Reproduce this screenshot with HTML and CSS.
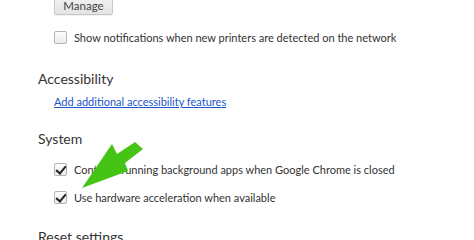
FILE: index.html
```html
<!DOCTYPE html>
<html>
<head>
<meta charset="utf-8">
<title>Settings</title>
<link rel="stylesheet" href="styles.css">
</head>
<body>
<div class="page">
	<div class="block">
		<button class="btn">Manage</button>
		<label class="row first"><span class="box"></span>Show notifications when new printers are detected on the network</label>
	</div>
	<h3 class="title t1">Accessibility</h3>
	<div class="block">
		<a href="javascript:;" class="link">Add additional accessibility features</a>
	</div>
	<h3 class="title t2">System</h3>
	<div class="block">
		<label class="row first"><span class="box on"></span>Continue running background apps when Google Chrome is closed</label>
		<label class="row"><span class="box on"></span>Use hardware acceleration when available</label>
	</div>
	<h3 class="title t3">Reset settings</h3>
</div>
<svg class="arrow" width="474" height="240" viewBox="0 0 474 240">
	<polygon points="82,188 112,144 117,154 135,142 143,149 125,163 128,171" fill="#46c415"/>
</svg>
</body>
</html>
```

FILE: styles.css
```css
*{margin:0; padding:0; box-sizing:border-box;}
body{background:#fff; font-family:Lato,"Noto Sans",sans-serif; color:#333; overflow:hidden; width:474px; height:240px; position:relative;}
.page{padding-left:38px; margin-top:-9px;}
.block{padding-left:16px; display:flex; flex-direction:column; align-items:flex-start;}
.btn{font:inherit; font-size:11.5px; color:#444; height:24px; width:59px; padding:0; padding-top:5px; border:1px solid #c8c8c8; border-radius:2px; background:linear-gradient(#f6f6f6,#e4e4e4); box-shadow:0 1px 0 rgba(0,0,0,0.05);}
.row{display:flex; align-items:center; font-size:11px; height:28px;}
.row.first{margin-top:8px;}
.box{width:13px; height:13px; border:1px solid #b4b4b4; border-radius:2px; background:linear-gradient(#fdfdfd,#ececec); margin-right:7px; position:relative;}
.box.on::after{content:""; position:absolute; left:3px; top:0px; width:4px; height:8px; border:solid #222; border-width:0 2px 2px 0; transform:rotate(40deg);}
.title{font-size:14px; line-height:18px; font-weight:normal; color:#333;}
.t1{margin-top:19px; margin-bottom:6px;}
.t2{margin-top:20px;}
.t2 + .block .row.first{margin-top:7px;}
.t3{margin-top:17px;}
.link{font-size:11px; color:#1a55c9; text-decoration:underline; line-height:16px;}
.arrow{position:absolute; left:0; top:0;}
```
